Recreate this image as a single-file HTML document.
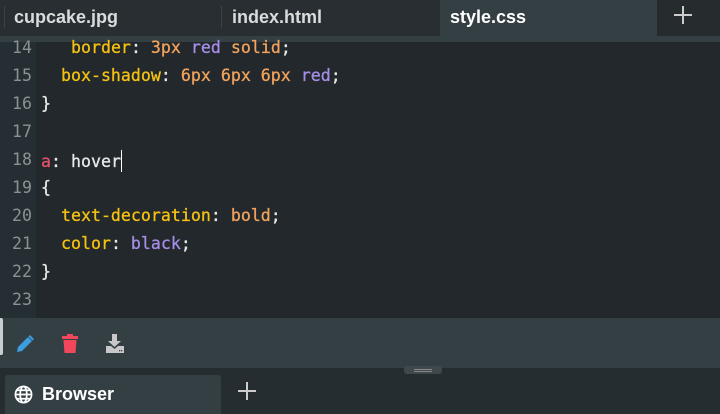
<!DOCTYPE html>
<html><head><style>
body{margin:0;width:720px;height:414px;overflow:hidden;background:#22282b;font-family:"Liberation Sans",sans-serif;position:relative}
.tabs{position:absolute;left:0;top:0;width:720px;height:36px;background:#282e31}
.tab{position:absolute;top:0;height:36px;line-height:35px;font-size:18px;color:#d8dcdd;font-weight:bold}
.strip{position:absolute;top:36px;left:0;width:720px;height:6px;background:#343f44}
.gutter{position:absolute;left:0;top:42px;width:36px;height:276px;background:#252e33}
.code{position:absolute;left:0;top:38px;font-family:"DejaVu Sans Mono",monospace;font-size:16.6px;color:#e8e8e8}
.ln{position:absolute;left:0;width:32px;text-align:right;color:#8a9296}
.tx{position:absolute;left:41px;white-space:pre;-webkit-text-stroke:0.3px currentColor}
.p{color:#f5c211}.v{color:#f2a35c}.k{color:#a68ee6}.s{color:#e5506a}
.tool{position:absolute;left:0;top:318px;width:720px;height:50px;background:#343f44}
.bottom{position:absolute;left:0;top:368px;width:720px;height:46px;background:#262d30}
.btab{position:absolute;left:5px;top:375px;width:216px;height:39px;background:#343f44;border-radius:3px 3px 0 0}
</style></head><body>
<div class="tabs">
<div style="position:absolute;left:4px;top:6px;width:1px;height:22px;background:#3a4448"></div>
<div class="tab" style="left:14px">cupcake.jpg</div>
<div style="position:absolute;left:221px;top:6px;width:1px;height:22px;background:#3a4448"></div>
<div class="tab" style="left:232px">index.html</div>
<div style="position:absolute;left:440px;top:0;width:217px;height:36px;background:#343f44"></div>
<div class="tab" style="left:450px;color:#fff">style.css</div>
<div style="position:absolute;left:657px;top:0;width:63px;height:36px;background:#262b2e"></div>
<div style="position:absolute;left:674px;top:14px;width:18px;height:2px;background:#ccc"></div>
<div style="position:absolute;left:682px;top:6px;width:2px;height:18px;background:#ccc"></div>
</div>
<div class="strip"></div>
<div class="gutter"></div>
<div class="code">
<div class="ln" style="top:0">14</div><div class="tx" style="top:0">   <span class="p">border</span>: <span class="v">3px</span> <span class="k">red</span> <span class="v">solid</span>;</div>
<div class="ln" style="top:28px">15</div><div class="tx" style="top:28px">  <span class="p">box-shadow</span>: <span class="v">6px 6px 6px</span> <span class="k">red</span>;</div>
<div class="ln" style="top:56px">16</div><div class="tx" style="top:56px">}</div>
<div class="ln" style="top:84px">17</div>
<div class="ln" style="top:112px">18</div><div class="tx" style="top:112px"><span class="s">a</span>: hover<span style="display:inline-block;width:1px;height:22px;background:#fff;vertical-align:-5px"></span></div>
<div class="ln" style="top:140px">19</div><div class="tx" style="top:140px">{</div>
<div class="ln" style="top:168px">20</div><div class="tx" style="top:168px">  <span class="p">text-decoration</span>: <span class="v">bold</span>;</div>
<div class="ln" style="top:196px">21</div><div class="tx" style="top:196px">  <span class="p">color</span>: <span class="k">black</span>;</div>
<div class="ln" style="top:224px">22</div><div class="tx" style="top:224px">}</div>
<div class="ln" style="top:252px">23</div>
</div>
<div class="tool">
<div style="position:absolute;left:0;top:0;width:3px;height:37px;background:#c9ced0;border-radius:0 2px 2px 0"></div>
<svg style="position:absolute;left:15px;top:16px" width="20" height="20" viewBox="0 0 20 20"><path d="M2 18 L3 13 L13 3 L17 7 L7 17 Z" fill="#3a9ee0"/><path d="M13.5 2.5 L15 1 L19 5 L17.5 6.5Z" fill="#3a9ee0"/></svg>
<svg style="position:absolute;left:61px;top:16px" width="18" height="20" viewBox="0 0 18 20"><rect x="1" y="2" width="16" height="3" fill="#f0485a"/><rect x="6" y="0" width="6" height="3" fill="#f0485a"/><path d="M2.5 6 H15.5 L14.5 19 H3.5Z" fill="#f0485a"/></svg>
<svg style="position:absolute;left:105px;top:15px" width="20" height="21" viewBox="0 0 20 21"><path d="M7 1 H12 V8 H16 L9.5 14 L3 8 H7Z" fill="#c8c8c8"/><path d="M1 13 H6 L9.5 16 L13 13 H19 V20 H1Z" fill="#c8c8c8"/><rect x="14" y="17" width="1.3" height="1.3" fill="#444"/><rect x="16" y="17" width="1.3" height="1.3" fill="#444"/></svg>
</div>
<div class="bottom"></div>
<div style="position:absolute;left:404px;top:366px;width:38px;height:8px;background:#3f494d;border-radius:3px"></div>
<div style="position:absolute;left:414px;top:369px;width:18px;height:1px;background:#888"></div>
<div style="position:absolute;left:414px;top:371px;width:18px;height:1px;background:#888"></div>
<div class="btab"></div>
<svg style="position:absolute;left:14px;top:385px" width="19" height="19" viewBox="0 0 20 20" fill="none" stroke="#fff" stroke-width="1.8"><circle cx="10" cy="10" r="8.5"/><ellipse cx="10" cy="10" rx="3.5" ry="8.5"/><path d="M1.5 10H18.5M3 5.5H17M3 14.5H17"/></svg>
<div style="position:absolute;left:42px;top:384px;font-size:18px;font-weight:bold;color:#fff">Browser</div>
<div style="position:absolute;left:238px;top:390px;width:18px;height:2px;background:#ccc"></div>
<div style="position:absolute;left:246px;top:382px;width:2px;height:18px;background:#ccc"></div>
</body></html>
